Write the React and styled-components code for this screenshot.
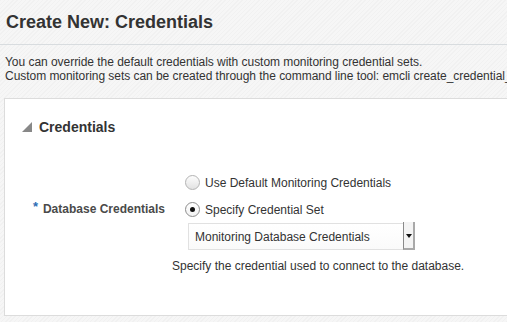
import styled, { createGlobalStyle } from "styled-components";

const Global = createGlobalStyle`
    html, body {
        margin: 0;
        padding: 0;
    }
    body {
        overflow: hidden;
        font-family: "Liberation Sans", Arial, sans-serif;
        color: #333;
        background: repeating-linear-gradient(135deg, #f1f1f1 0 1px, #f6f6f6 1px 3px);
    }
`;

const Page = styled.div`
    width: 507px;
    height: 322px;
    overflow: hidden;
`;
const Header = styled.div`
    height: 44px;
    display: flex;
    align-items: center;
    padding: 0 6px;
    border-bottom: 1px solid #d8dcdf;
`;
const Title = styled.h1`
    margin: 0;
    font-size: 18px;
    font-weight: 700;
    color: #333;
`;
const Intro = styled.p`
    margin: 0;
    padding: 10px 5px 0;
    font-size: 12px;
    line-height: 14px;
    letter-spacing: -0.04px;
    white-space: nowrap;
    color: #333;
`;
const Panel = styled.section`
    margin: 15px -20px 0 4px;
    background: #fff;
    border: 1px solid #dcdcdc;
    padding: 19px 0 41px;
`;
const SectionHead = styled.h2`
    display: flex;
    align-items: center;
    margin: 0 0 33px 17px;
    font-size: 14px;
    line-height: 18px;
    font-weight: 700;
    color: #333;
`;
const Disclosure = styled.span`
    width: 0;
    height: 0;
    margin-right: 7px;
    border-style: solid;
    border-width: 0 0 10px 10px;
    border-color: transparent transparent #888 transparent;
`;
const Form = styled.div`
    display: grid;
    grid-template-columns: 160px auto;
    column-gap: 7px;
    align-items: end;
    justify-content: start;
`;
const Label = styled.label`
    text-align: right;
    font-size: 12px;
    font-weight: 700;
    color: #4a4a4a;
    line-height: 16px;
    padding-bottom: 6px;
    white-space: nowrap;
`;
const Required = styled.span`
    color: #2e6db5;
    font-size: 13px;
    margin-right: 5px;
    vertical-align: 2px;
`;
const RadioGroup = styled.div`
    display: flex;
    flex-direction: column;
    padding-left: 13px;
`;
const RadioRow = styled.label`
    display: flex;
    align-items: center;
    height: 27px;
    font-size: 12px;
    color: #333;
    gap: 5px;
`;
const Radio = styled.span`
    box-sizing: border-box;
    width: 15px;
    height: 15px;
    border-radius: 50%;
    border: 1px solid ${p => (p.$checked ? "#8c8c8c" : "#b3b3b3")};
    background: ${p => (p.$checked ? "linear-gradient(#fff, #f2f2f2)" : "linear-gradient(#fdfdfd, #e2e2e2)")};
    display: flex;
    align-items: center;
    justify-content: center;
    &::after {
        content: "";
        display: ${p => (p.$checked ? "block" : "none")};
        width: 5px;
        height: 5px;
        border-radius: 50%;
        background: #111;
    }
`;
const Cell = styled.div`
    grid-column: 2;
`;
const Select = styled.div`
    box-sizing: border-box;
    margin-left: 16px;
    width: 227px;
    height: 27px;
    display: flex;
    align-items: center;
    justify-content: space-between;
    border: 1px solid #e1e1e1;
    background: linear-gradient(#fff, #fafafa);
    font-size: 12px;
    color: #333;
    padding-left: 6px;
`;
const DropButton = styled.span`
    box-sizing: border-box;
    align-self: stretch;
    width: 12px;
    margin: -2px -1px -1px 0;
    border-left: 1px solid #8a8a8a;
    border-right: 2px solid #a9a9a9;
    border-bottom: 2px solid #a9a9a9;
    background: #f4f4f4;
    display: flex;
    align-items: center;
    justify-content: center;
    &::after {
        content: "";
        margin-top: 2px;
        border-style: solid;
        border-width: 4px 3px 0 3px;
        border-color: #111 transparent transparent transparent;
    }
`;
const Help = styled.div`
    margin-top: 8px;
    font-size: 12px;
    line-height: 16px;
    color: #333;
    white-space: nowrap;
`;

export default function App() {
    return (
        <Page>
            <Global />
            <Header>
                <Title>Create New: Credentials</Title>
            </Header>
            <Intro>
                You can override the default credentials with custom monitoring credential sets.
                <br />
                Custom monitoring sets can be created through the command line tool: emcli create_credential_set
            </Intro>
            <Panel>
                <SectionHead>
                    <Disclosure />
                    Credentials
                </SectionHead>
                <Form>
                    <Label>
                        <Required>*</Required>Database Credentials
                    </Label>
                    <RadioGroup>
                        <RadioRow>
                            <Radio />
                            Use Default Monitoring Credentials
                        </RadioRow>
                        <RadioRow>
                            <Radio $checked />
                            Specify Credential Set
                        </RadioRow>
                    </RadioGroup>
                    <Cell>
                        <Select>
                            Monitoring Database Credentials
                            <DropButton />
                        </Select>
                    </Cell>
                    <Cell>
                        <Help>Specify the credential used to connect to the database.</Help>
                    </Cell>
                </Form>
            </Panel>
        </Page>
    );
}
